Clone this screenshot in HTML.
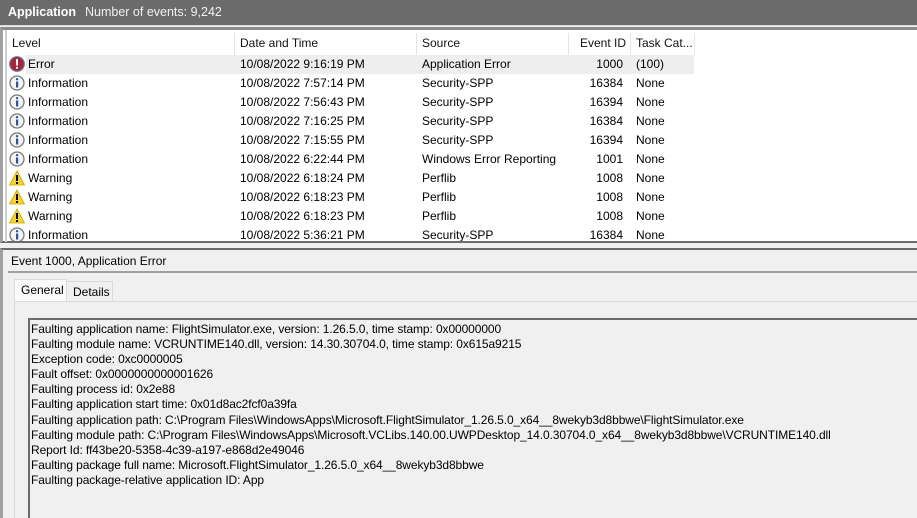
<!DOCTYPE html>
<html><head><style>
*{margin:0;padding:0;box-sizing:border-box}
body{width:917px;height:518px;overflow:hidden;background:#f0f0f0;font-family:"Liberation Sans",sans-serif;font-size:12px;color:#000;position:relative}
.abs{position:absolute;white-space:nowrap}
.title{left:0;top:0;width:917px;height:26px;background:#6b6b6b;border-bottom:1px solid #d8d8d8}
.list{left:0;top:27px;width:917px;height:216px;background:#fff;border-left:3px solid #a0a0a0;border-top:3px solid #8a8a8a;border-bottom:2px solid #6b6b6b}
.hdr{top:33px;height:22px;line-height:20px;color:#111}
.sep{top:33px;width:1px;height:22px;background:#e5e5e5}
.row{height:19px;line-height:19px}
.ic{position:absolute;left:9px;width:16px;height:16px}
.det{left:0;top:248px;width:917px;height:270px;border-top:2px solid #6b6b6b;border-left:3px solid #a0a0a0}
.txt div{height:15.1px;line-height:15px}
</style></head><body>
<div class="abs title"></div>
<div class="abs" style="left:8px;top:5px;color:#fff;font-weight:bold;font-size:12.5px">Application</div>
<div class="abs" style="left:85px;top:5px;color:#f0f0f0;font-size:12.5px">Number of events: 9,242</div>
<div class="abs list"></div>
<div class="abs" style="left:5px;top:30px;width:2px;height:212px;background:#d0d0d0"></div>
<div class="abs hdr" style="left:12px">Level</div>
<div class="abs sep" style="left:234px"></div>
<div class="abs hdr" style="left:240px">Date and Time</div>
<div class="abs sep" style="left:416px"></div>
<div class="abs hdr" style="left:422px">Source</div>
<div class="abs sep" style="left:568px"></div>
<div class="abs hdr" style="left:580px">Event ID</div>
<div class="abs sep" style="left:630px"></div>
<div class="abs hdr" style="left:636px">Task Cat...</div>
<div class="abs sep" style="left:694px"></div>
<div class="abs" style="left:26px;top:55px;width:668px;height:19px;background:#eeeeee"></div>
<div id="rows"></div>
<svg width="0" height="0" style="position:absolute">
<defs>
<g id="info"><circle cx="8" cy="8" r="7" fill="#f4f4f4" stroke="#777" stroke-width="1.3"/><rect x="7" y="6.5" width="2.2" height="6" fill="#2a52a8"/><circle cx="8.1" cy="4.2" r="1.2" fill="#2a52a8"/></g>
<g id="err"><circle cx="8" cy="8" r="7.3" fill="#a8243a" stroke="#6b7a99" stroke-width="1.2"/><rect x="7" y="3" width="2" height="6.5" fill="#fff"/><rect x="7" y="10.8" width="2" height="2" fill="#fff"/></g>
<g id="warn"><path d="M8 1 L15.5 15 L0.5 15 Z" fill="#f5d424" stroke="#c9a500" stroke-width="0.8"/><rect x="7" y="5" width="2" height="6" fill="#000"/><rect x="7" y="12" width="2" height="2" fill="#000"/></g>
</defs></svg>
<script>
var d=[["err","Error","10/08/2022 9:16:19 PM","Application Error","1000","(100)"],
["info","Information","10/08/2022 7:57:14 PM","Security-SPP","16384","None"],
["info","Information","10/08/2022 7:56:43 PM","Security-SPP","16394","None"],
["info","Information","10/08/2022 7:16:25 PM","Security-SPP","16384","None"],
["info","Information","10/08/2022 7:15:55 PM","Security-SPP","16394","None"],
["info","Information","10/08/2022 6:22:44 PM","Windows Error Reporting","1001","None"],
["warn","Warning","10/08/2022 6:18:24 PM","Perflib","1008","None"],
["warn","Warning","10/08/2022 6:18:23 PM","Perflib","1008","None"],
["warn","Warning","10/08/2022 6:18:23 PM","Perflib","1008","None"],
["info","Information","10/08/2022 5:36:21 PM","Security-SPP","16384","None"]];
var h="";
d.forEach(function(r,i){var t=55+i*19;
h+='<div class="abs" style="left:0;top:'+t+'px;width:917px;height:'+(i==9?15:19)+'px;overflow:hidden">'+
'<svg class="ic" style="top:1px" viewBox="0 0 16 16"><use href="#'+r[0]+'"/></svg>'+
'<div class="abs row" style="left:28px;top:0">'+r[1]+'</div>'+
'<div class="abs row" style="left:240px;top:0">'+r[2]+'</div>'+
'<div class="abs row" style="left:422px;top:0">'+r[3]+'</div>'+
'<div class="abs row" style="left:560px;top:0;width:63px;text-align:right">'+r[4]+'</div>'+
'<div class="abs row" style="left:636px;top:0">'+r[5]+'</div></div>';});
document.getElementById("rows").innerHTML=h;
</script>
<div class="abs det"></div>
<div class="abs" style="left:11px;top:254px;font-size:12px">Event 1000, Application Error</div>
<div class="abs" style="left:8px;top:271px;width:909px;height:2px;background:#a0a0a0"></div>
<div class="abs" style="left:14px;top:279px;width:53px;height:23px;background:#fafafa;border:1px solid #d9d9d9;border-bottom:none"></div>
<div class="abs" style="left:21px;top:283px">General</div>
<div class="abs" style="left:67px;top:281px;width:46px;height:20px;background:#f0f0f0;border:1px solid #d9d9d9;border-left:none;border-bottom:none"></div>
<div class="abs" style="left:73px;top:285px">Details</div>
<div class="abs" style="left:14px;top:301px;width:903px;height:217px;border-top:1px solid #d9d9d9;border-left:1px solid #d9d9d9"></div>
<div class="abs" style="left:28px;top:318px;width:889px;height:200px;border-top:2px solid #6b6b6b;border-left:2px solid #6b6b6b"></div>
<div class="abs txt" style="left:31px;top:322px;font-size:12px;letter-spacing:-0.1px">
<div>Faulting application name: FlightSimulator.exe, version: 1.26.5.0, time stamp: 0x00000000</div>
<div>Faulting module name: VCRUNTIME140.dll, version: 14.30.30704.0, time stamp: 0x615a9215</div>
<div>Exception code: 0xc0000005</div>
<div>Fault offset: 0x0000000000001626</div>
<div>Faulting process id: 0x2e88</div>
<div>Faulting application start time: 0x01d8ac2fcf0a39fa</div>
<div>Faulting application path: C:\Program Files\WindowsApps\Microsoft.FlightSimulator_1.26.5.0_x64__8wekyb3d8bbwe\FlightSimulator.exe</div>
<div>Faulting module path: C:\Program Files\WindowsApps\Microsoft.VCLibs.140.00.UWPDesktop_14.0.30704.0_x64__8wekyb3d8bbwe\VCRUNTIME140.dll</div>
<div>Report Id: ff43be20-5358-4c39-a197-e868d2e49046</div>
<div>Faulting package full name: Microsoft.FlightSimulator_1.26.5.0_x64__8wekyb3d8bbwe</div>
<div>Faulting package-relative application ID: App</div>
</div>
</body></html>
